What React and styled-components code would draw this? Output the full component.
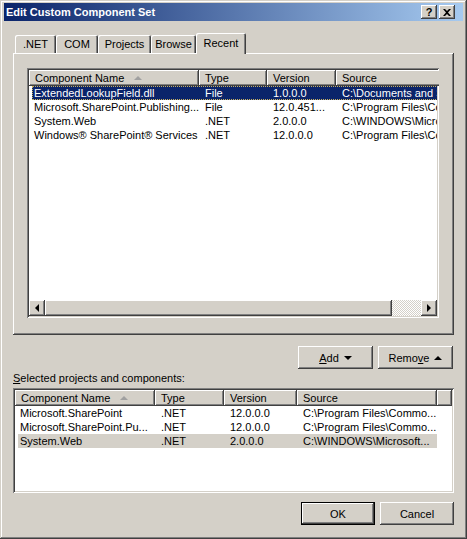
import React from 'react'
import styled, { createGlobalStyle } from 'styled-components'

const GlobalStyle = createGlobalStyle`
html, body {
  margin: 0;
  padding: 0;
  background: #d4d0c8;
}
body {
  font-family: "Liberation Sans", Arial, sans-serif;
  font-size: 11px;
  color: #000;
}
`

const raised = `
box-shadow: inset -1px -1px #404040, inset 1px 1px #fff, inset -2px -2px #808080, inset 2px 2px #d4d0c8;
`

const sunken = `
box-shadow: inset 1px 1px #808080, inset -1px -1px #fff, inset 2px 2px #404040, inset -2px -2px #d4d0c8;
`

const Window = styled.div`
width: 467px;
height: 539px;
box-sizing: border-box;
padding: 3px 4px 4px 4px;
background: #d4d0c8;
box-shadow: inset -1px -1px #404040, inset 1px 1px #d4d0c8, inset -2px -2px #808080, inset 2px 2px #fff;
display: flex;
flex-direction: column;
`

const TitleBar = styled.div`
height: 18px;
display: flex;
align-items: center;
gap: 2px;
padding: 0 8px 0 2px;
background: linear-gradient(to right, #0a246a, #a6caf0);
color: #fff;
font-weight: bold;
font-size: 11px;
`

const Title = styled.span`
flex: 1;
`

const CaptionButton = styled.div`
width: 16px;
height: 14px;
box-sizing: border-box;
background: #d4d0c8;
${raised}
display: flex;
align-items: center;
justify-content: center;
color: #000;
font-weight: bold;
font-size: 11px;
`

const Body = styled.div`
flex: 1;
display: flex;
flex-direction: column;
padding: 0 9px;
`

const TabStrip = styled.div`
margin-top: 12px;
height: 20px;
display: flex;
align-items: flex-end;
padding-left: 2px;
`

const Tab = styled.div`
width: ${p => p.$w}px;
height: ${p => (p.$active ? 21 : 18)}px;
box-sizing: border-box;
display: flex;
align-items: center;
justify-content: center;
padding-bottom: ${p => (p.$active ? 2 : 0)}px;
background: #d4d0c8;
border-radius: 2px 2px 0 0;
box-shadow: inset 1px 1px #fff, inset -1px 0 #404040, inset -2px 0 #808080;
margin-bottom: ${p => (p.$active ? -1 : 0)}px;
position: relative;
z-index: ${p => (p.$active ? 1 : 0)};
`

const TabPanel = styled.div`
height: 282px;
box-sizing: border-box;
padding: 15px 15px 17px 14px;
box-shadow: inset -1px -1px #404040, inset 1px 1px #fff, inset -2px -2px #808080;
display: flex;
flex-direction: column;
`

const ListView = styled.div`
height: ${p => p.$h}px;
flex: none;
box-sizing: border-box;
padding: 2px;
background: #fff;
${sunken}
display: flex;
flex-direction: column;
overflow: hidden;
`

const HeaderRow = styled.div`
display: flex;
height: 16px;
flex: none;
`

const HeaderCell = styled.div`
width: ${p => p.$w}px;
flex: none;
box-sizing: border-box;
padding-left: 6px;
line-height: 16px;
background: #d4d0c8;
white-space: nowrap;
overflow: hidden;
box-shadow: inset -1px -1px #404040, inset 1px 1px #fff, inset -2px -2px #808080;
display: flex;
align-items: center;
`

const HeaderFiller = styled(HeaderCell)`
flex: 1;
`

const SortArrow = styled.span`
margin-left: 10px;
width: 0;
height: 0;
border-left: 4px solid transparent;
border-right: 4px solid transparent;
border-bottom: 4px solid #a0a0a0;
`

const Rows = styled.div`
flex: 1;
overflow: hidden;
`

const Row = styled.div`
display: flex;
height: 14px;
line-height: 14px;
margin-left: 3px;
width: max-content;
background: ${p => (p.$sel === 'focus' ? '#0a246a' : p.$sel === 'inactive' ? '#d4d0c8' : 'transparent')};
color: ${p => (p.$sel === 'focus' ? '#fff' : '#000')};
outline: ${p => (p.$sel === 'focus' ? '1px dotted #c8b060' : 'none')};
outline-offset: -1px;
`

const Cell = styled.div`
width: ${p => p.$w}px;
flex: none;
box-sizing: border-box;
padding-left: ${p => (p.$first ? 2 : 6)}px;
white-space: nowrap;
overflow: hidden;
`

const ScrollBar = styled.div`
height: 16px;
flex: none;
display: flex;
`

const ScrollButton = styled.div`
width: 16px;
height: 16px;
flex: none;
box-sizing: border-box;
background: #d4d0c8;
${raised}
display: flex;
align-items: center;
justify-content: center;
`

const Arrow = styled.span`
width: 0;
height: 0;
border-top: 4px solid transparent;
border-bottom: 4px solid transparent;
border-left: ${p => (p.$dir === 'right' ? '4px solid #000' : '0')};
border-right: ${p => (p.$dir === 'left' ? '4px solid #000' : '0')};
`

const Thumb = styled.div`
width: ${p => p.$w}px;
flex: none;
background: #d4d0c8;
${raised}
`

const Track = styled.div`
flex: 1;
background: repeating-conic-gradient(#fff 0 25%, #d4d0c8 0 50%) 0 0 / 2px 2px;
`

const ButtonRow = styled.div`
display: flex;
justify-content: flex-end;
gap: 5px;
margin-top: ${p => p.$mt}px;
padding-right: ${p => p.$pr || 0}px;
`

const Button = styled.div`
width: ${p => p.$w || 75}px;
height: 23px;
box-sizing: border-box;
background: #d4d0c8;
${raised}
${p => p.$default && `
  box-shadow: inset 0 0 0 1px #000, inset -2px -2px #404040, inset 2px 2px #fff, inset -3px -3px #808080;
`}
display: flex;
align-items: center;
justify-content: center;
gap: 5px;
`

const DropArrow = styled.span`
width: 0;
height: 0;
border-left: 4px solid transparent;
border-right: 4px solid transparent;
border-top: ${p => (p.$up ? '0' : '4px solid #000')};
border-bottom: ${p => (p.$up ? '4px solid #000' : '0')};
`

const Label = styled.div`
margin-top: 2px;
margin-bottom: 3px;
line-height: 14px;
`

const topColumns = [
  { label: 'Component Name', w: 170, sort: true },
  { label: 'Type', w: 68 },
  { label: 'Version', w: 69 },
  { label: 'Source', w: 136 },
]

const topRows = [
  { cells: ['ExtendedLookupField.dll', 'File', '1.0.0.0', 'C:\\Documents and Settings'], sel: 'focus' },
  { cells: ['Microsoft.SharePoint.Publishing...', 'File', '12.0.451...', 'C:\\Program Files\\Common'] },
  { cells: ['System.Web', '.NET', '2.0.0.0', 'C:\\WINDOWS\\Microsoft'] },
  { cells: ['Windows\u00ae SharePoint\u00ae Services', '.NET', '12.0.0.0', 'C:\\Program Files\\Common'] },
]

const bottomColumns = [
  { label: 'Component Name', w: 140, sort: true },
  { label: 'Type', w: 69 },
  { label: 'Version', w: 73 },
  { label: 'Source', w: 140 },
]

const bottomRows = [
  { cells: ['Microsoft.SharePoint', '.NET', '12.0.0.0', 'C:\\Program Files\\Commo...'] },
  { cells: ['Microsoft.SharePoint.Pu...', '.NET', '12.0.0.0', 'C:\\Program Files\\Commo...'] },
  { cells: ['System.Web', '.NET', '2.0.0.0', 'C:\\WINDOWS\\Microsoft...'], sel: 'inactive' },
]

const tabs = [
  { label: '.NET', w: 41 },
  { label: 'COM', w: 42 },
  { label: 'Projects', w: 53 },
  { label: 'Browse', w: 45 },
  { label: 'Recent', w: 50, active: true },
]

function Table({ columns, rows, filler }) {
  return (
    <>
      <HeaderRow>
        {columns.map(c => (
          <HeaderCell key={c.label} $w={c.w}>
            {c.label}
            {c.sort && <SortArrow />}
          </HeaderCell>
        ))}
        {filler && <HeaderFiller $w={0} />}
      </HeaderRow>
      <Rows>
        {rows.map((r, i) => (
          <Row key={i} $sel={r.sel}>
            {r.cells.map((text, j) => (
              <Cell key={j} $first={j === 0} $w={j === 0 ? columns[j].w - 3 : columns[j].w}>
                {text}
              </Cell>
            ))}
          </Row>
        ))}
      </Rows>
    </>
  )
}

export default function App() {
  return (
    <>
      <GlobalStyle />
      <Window>
        <TitleBar>
          <Title>Edit Custom Component Set</Title>
          <CaptionButton>?</CaptionButton>
          <CaptionButton>
            <svg width="8" height="7" viewBox="0 0 8 7">
              <path d="M0 0h2l2 2 2-2h2L5 3.5 8 7H6L4 5 2 7H0l3-3.5z" fill="#000" />
            </svg>
          </CaptionButton>
        </TitleBar>
        <Body>
          <TabStrip>
            {tabs.map(t => (
              <Tab key={t.label} $w={t.w} $active={t.active}>{t.label}</Tab>
            ))}
          </TabStrip>
          <TabPanel>
            <ListView $h={250}>
              <Table columns={topColumns} rows={topRows} />
              <ScrollBar>
                <ScrollButton><Arrow $dir="left" /></ScrollButton>
                <Thumb $w={347} />
                <Track />
                <ScrollButton><Arrow $dir="right" /></ScrollButton>
              </ScrollBar>
            </ListView>
          </TabPanel>
          <ButtonRow $mt={11} $pr={1}>
            <Button><span><u>A</u>dd</span><DropArrow /></Button>
            <Button><span>Remo<u>v</u>e</span><DropArrow $up /></Button>
          </ButtonRow>
          <Label><u>S</u>elected projects and components:</Label>
          <ListView $h={105}>
            <Table columns={bottomColumns} rows={bottomRows} filler />
          </ListView>
          <ButtonRow $mt={9}>
            <Button $default $w={74}>OK</Button>
            <Button $w={74}>Cancel</Button>
          </ButtonRow>
        </Body>
      </Window>
    </>
  )
}
